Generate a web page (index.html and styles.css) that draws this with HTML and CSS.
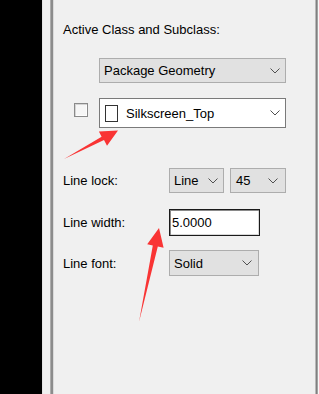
FILE: index.html
```html
<!DOCTYPE html>
<html>
<head>
<meta charset="utf-8">
<link rel="stylesheet" href="styles.css">
</head>
<body>
<div class="screen">
  <div class="black"></div>
  <div class="gutter"></div>
  <div class="sep"></div>
  <div class="panel">
    <div class="title">Active Class and Subclass:</div>
    <div class="combo gray pkg"><span>Package Geometry</span><svg class="chev" width="10" height="6" viewBox="0 0 10 6"><polyline points="0.5,0.5 5,5 9.5,0.5" fill="none" stroke="#505050" stroke-width="1"/></svg></div>
    <div class="subrow">
      <span class="check"></span>
      <div class="combo white sub"><span class="swatch"></span><span>Silkscreen_Top</span><svg class="chev" width="10" height="6" viewBox="0 0 10 6"><polyline points="0.5,0.5 5,5 9.5,0.5" fill="none" stroke="#505050" stroke-width="1"/></svg></div>
    </div>
    <div class="row r1">
      <span class="label">Line lock:</span>
      <div class="combo gray line"><span>Line</span><svg class="chev" width="10" height="6" viewBox="0 0 10 6"><polyline points="0.5,0.5 5,5 9.5,0.5" fill="none" stroke="#505050" stroke-width="1"/></svg></div>
      <div class="combo gray deg"><span>45</span><svg class="chev" width="10" height="6" viewBox="0 0 10 6"><polyline points="0.5,0.5 5,5 9.5,0.5" fill="none" stroke="#505050" stroke-width="1"/></svg></div>
    </div>
    <div class="row r2">
      <span class="label">Line width:</span>
      <div class="input"><span>5.0000</span></div>
    </div>
    <div class="row r3">
      <span class="label">Line font:</span>
      <div class="combo gray solid"><span>Solid</span><svg class="chev" width="10" height="6" viewBox="0 0 10 6"><polyline points="0.5,0.5 5,5 9.5,0.5" fill="none" stroke="#505050" stroke-width="1"/></svg></div>
    </div>
  </div>
  <div class="rsep"></div>
</div>
<svg class="arrows" width="319" height="394" viewBox="0 0 319 394">
  <polygon fill="#f93434" points="64,159 101.6,136.8 98.9,131.5 118,130.5 107.0,145.7 104.0,140.0"/>
  <polygon fill="#f93434" points="139,322 152.8,245.5 147.2,244.3 159,228 163.6,247.8 157.8,246.5"/>
</svg>
</body>
</html>
```
FILE: styles.css
```css
html, body {
  margin: 0;
  padding: 0;
  background: #f0f0f0;
}
body {
  width: 319px;
  height: 394px;
  overflow: hidden;
  position: relative;
  font-family: "Liberation Sans", Arial, sans-serif;
  font-size: 13px;
  color: #000;
}
.screen {
  display: flex;
  height: 394px;
}
.black {
  width: 42px;
  background: #000;
}
.gutter {
  width: 7px;
  background: #f0f0f0;
  border-left: 1px solid #e4e4e4;
}
.sep {
  width: 4px;
  background: linear-gradient(to right, #adadad 0, #adadad 1px, #8c8c8c 1px, #8c8c8c 3px, #dadada 3px);
}
.panel {
  width: 261px;
  background: #f0f0f0;
  display: flex;
  flex-direction: column;
  align-items: flex-start;
}
.rsep {
  width: 4px;
  background: linear-gradient(to right, #b8b8b8 0, #b8b8b8 1px, #808080 1px, #808080 2px, #a4a4a4 2px, #a4a4a4 3px, #f8f8f8 3px);
}
.title {
  margin: 22px 0 0 9px;
  line-height: 15px;
}
.combo {
  box-sizing: border-box;
  display: flex;
  align-items: center;
  line-height: 15px;
}
.combo .chev {
  margin-left: auto;
  flex: none;
}
.gray {
  background: #e1e1e1;
  border: 1px solid #adadad;
}
.white {
  background: #fff;
  border: 1px solid #7a7a7a;
}
.pkg {
  margin: 21px 0 0 45px;
  width: 187px;
  height: 25px;
  padding: 0 5px 0 4px;
}
.subrow {
  margin: 15px 0 0 20px;
  display: flex;
  align-items: flex-start;
}
.check {
  box-sizing: border-box;
  width: 14px;
  height: 14px;
  margin-top: 5px;
  margin-right: 11px;
  border: 1px solid #8a8a8a;
  background: #f6f6f6;
  box-shadow: inset 1px 1px 0 #d4d4d4, inset -1px -1px 0 #fdfdfd;
}
.sub {
  width: 187px;
  height: 30px;
  padding: 0 5px 0 5px;
}
.swatch {
  box-sizing: border-box;
  width: 13px;
  height: 17px;
  border: 1px solid #333;
  background: #fff;
  margin-right: 8px;
  flex: none;
}
.row {
  display: flex;
  align-items: center;
  margin-left: 9px;
}
.label {
  width: 106px;
  line-height: 15px;
}
.r1 { margin-top: 40px; }
.r2 { margin-top: 16px; }
.r3 { margin-top: 14px; }
.line {
  width: 55px;
  height: 25px;
  padding: 0 5px 0 4px;
  margin-right: 6px;
}
.deg {
  width: 56px;
  height: 25px;
  padding: 0 7px 0 5px;
}
.input {
  box-sizing: border-box;
  width: 91px;
  height: 27px;
  border: 1px solid #1a1a1a;
  box-shadow: inset 1px 1px 0 #8a8a8a, inset -1px -1px 0 #d8d8d8;
  background: #fff;
  display: flex;
  align-items: center;
  padding-left: 2px;
  line-height: 15px;
}
.solid {
  width: 90px;
  height: 26px;
  padding: 0 6px 0 4px;
}
.arrows {
  position: absolute;
  left: 0;
  top: 0;
  pointer-events: none;
}
```
